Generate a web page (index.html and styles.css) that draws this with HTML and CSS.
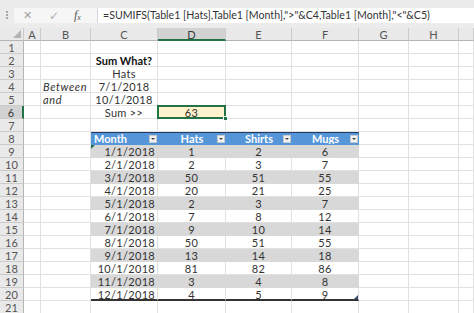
FILE: index.html
```html
<!DOCTYPE html>
<html>
<head>
<meta charset="utf-8">
<link rel="stylesheet" href="styles.css">
</head>
<body>
<div class="fbar">
  <div class="grip"><i></i><i></i><i></i></div>
  <div class="btns">
    <span class="x">✕</span>
    <span class="ok">✓</span>
    <span class="fx">f<sub>x</sub></span>
  </div>
  <div class="formula">=SUMIFS(Table1 [Hats],Table1 [Month],"&gt;"&amp;C4,Table1 [Month],"&lt;"&amp;C5)</div>
</div>
<div class="sheet">
  <div class="ch corner"><svg width="8" height="8" viewBox="0 0 8 8"><polygon points="8,0 8,8 0,8" fill="#b4b4b4"/></svg></div>
  <div class="ch">A</div><div class="ch">B</div><div class="ch">C</div><div class="ch sel">D</div><div class="ch">E</div><div class="ch">F</div><div class="ch">G</div><div class="ch">H</div><div class="ch"></div>

  <div class="rh">1</div><div class="c"></div><div class="c"></div><div class="c"></div><div class="c"></div><div class="c"></div><div class="c"></div><div class="c"></div><div class="c"></div><div class="c"></div>
  <div class="rh">2</div><div class="c"></div><div class="c"></div><div class="c mid b">Sum What?</div><div class="c"></div><div class="c"></div><div class="c"></div><div class="c"></div><div class="c"></div><div class="c"></div>
  <div class="rh">3</div><div class="c"></div><div class="c"></div><div class="c mid">Hats</div><div class="c"></div><div class="c"></div><div class="c"></div><div class="c"></div><div class="c"></div><div class="c"></div>
  <div class="rh">4</div><div class="c"></div><div class="c it">Between</div><div class="c mid">7/1/2018</div><div class="c"></div><div class="c"></div><div class="c"></div><div class="c"></div><div class="c"></div><div class="c"></div>
  <div class="rh">5</div><div class="c"></div><div class="c it">and</div><div class="c mid">10/1/2018</div><div class="c"></div><div class="c"></div><div class="c"></div><div class="c"></div><div class="c"></div><div class="c"></div>
  <div class="rh sel">6</div><div class="c"></div><div class="c"></div><div class="c mid">Sum &gt;&gt;</div><div class="c mid active">63<span class="handle"></span></div><div class="c"></div><div class="c"></div><div class="c"></div><div class="c"></div><div class="c"></div>
  <div class="rh">7</div><div class="c"></div><div class="c"></div><div class="c"></div><div class="c"></div><div class="c"></div><div class="c"></div><div class="c"></div><div class="c"></div><div class="c"></div>

  <div class="rh">8</div><div class="c"></div><div class="c"></div>
  <div class="th left"><span class="lbl">Month</span><span class="dd"></span></div>
  <div class="th"><span class="lbl">Hats</span><span class="dd"></span></div>
  <div class="th"><span class="lbl">Shirts</span><span class="dd"></span></div>
  <div class="th"><span class="lbl">Mugs</span><span class="dd"></span></div>
  <div class="c"></div><div class="c"></div><div class="c"></div>

  <div class="rh">9</div><div class="c"></div><div class="c"></div><div class="c r band"><span class="err"></span>1/1/2018</div><div class="c mid band">1</div><div class="c mid band">2</div><div class="c mid band">6</div><div class="c"></div><div class="c"></div><div class="c"></div>
  <div class="rh">10</div><div class="c"></div><div class="c"></div><div class="c r">2/1/2018</div><div class="c mid">2</div><div class="c mid">3</div><div class="c mid">7</div><div class="c"></div><div class="c"></div><div class="c"></div>
  <div class="rh">11</div><div class="c"></div><div class="c"></div><div class="c r band">3/1/2018</div><div class="c mid band">50</div><div class="c mid band">51</div><div class="c mid band">55</div><div class="c"></div><div class="c"></div><div class="c"></div>
  <div class="rh">12</div><div class="c"></div><div class="c"></div><div class="c r">4/1/2018</div><div class="c mid">20</div><div class="c mid">21</div><div class="c mid">25</div><div class="c"></div><div class="c"></div><div class="c"></div>
  <div class="rh">13</div><div class="c"></div><div class="c"></div><div class="c r band">5/1/2018</div><div class="c mid band">2</div><div class="c mid band">3</div><div class="c mid band">7</div><div class="c"></div><div class="c"></div><div class="c"></div>
  <div class="rh">14</div><div class="c"></div><div class="c"></div><div class="c r">6/1/2018</div><div class="c mid">7</div><div class="c mid">8</div><div class="c mid">12</div><div class="c"></div><div class="c"></div><div class="c"></div>
  <div class="rh">15</div><div class="c"></div><div class="c"></div><div class="c r band">7/1/2018</div><div class="c mid band">9</div><div class="c mid band">10</div><div class="c mid band">14</div><div class="c"></div><div class="c"></div><div class="c"></div>
  <div class="rh">16</div><div class="c"></div><div class="c"></div><div class="c r">8/1/2018</div><div class="c mid">50</div><div class="c mid">51</div><div class="c mid">55</div><div class="c"></div><div class="c"></div><div class="c"></div>
  <div class="rh">17</div><div class="c"></div><div class="c"></div><div class="c r band">9/1/2018</div><div class="c mid band">13</div><div class="c mid band">14</div><div class="c mid band">18</div><div class="c"></div><div class="c"></div><div class="c"></div>
  <div class="rh">18</div><div class="c"></div><div class="c"></div><div class="c r">10/1/2018</div><div class="c mid">81</div><div class="c mid">82</div><div class="c mid">86</div><div class="c"></div><div class="c"></div><div class="c"></div>
  <div class="rh">19</div><div class="c"></div><div class="c"></div><div class="c r band">11/1/2018</div><div class="c mid band">3</div><div class="c mid band">4</div><div class="c mid band">8</div><div class="c"></div><div class="c"></div><div class="c"></div>
  <div class="rh">20</div><div class="c"></div><div class="c"></div><div class="c r last">12/1/2018</div><div class="c mid last">4</div><div class="c mid last">5</div><div class="c mid last">9<span class="resize"></span></div><div class="c"></div><div class="c"></div><div class="c"></div>
  <div class="rh">21</div><div class="c"></div><div class="c"></div><div class="c"></div><div class="c"></div><div class="c"></div><div class="c"></div><div class="c"></div><div class="c"></div><div class="c"></div>
</div>
</body>
</html>
```
FILE: styles.css
```css
* { box-sizing: border-box; margin: 0; padding: 0; }
html, body { width: 474px; height: 313px; overflow: hidden; background: #fff; }
body { font-family: Lato, "DejaVu Sans", sans-serif; font-size: 11px; color: #333; }

.fbar { height: 28px; background: #ececec; display: flex; align-items: flex-start; padding-top: 8px; }
.grip { width: 14px; height: 14px; display: flex; flex-direction: column; align-items: center; justify-content: center; gap: 1px; }
.grip i { display: block; width: 2px; height: 2px; background: #a8a8a8; }
.btns { width: 84px; height: 15px; background: #f6f6f6; display: flex; align-items: center; border-right: 1px solid #d8d8d8; }
.btns .x { color: #a0a0a0; font-family: "DejaVu Sans", sans-serif; font-size: 11px; margin-left: 9px; width: 26px; }
.btns .ok { color: #b0b0b0; font-family: "DejaVu Sans", sans-serif; font-size: 12px; width: 25px; }
.btns .fx { color: #555; font-family: "Liberation Serif", serif; font-style: italic; font-size: 12px; }
.btns .fx sub { font-size: 8px; vertical-align: -1px; }
.formula { flex: 1; height: 15px; background: #fff; padding-left: 5px; line-height: 15px; white-space: nowrap; color: #333; font-size: 10.6px; }

.sheet { display: grid; grid-template-columns: 24px 17px 50px 67px 68px 66px 67px 50px 50px 15px; grid-auto-rows: 13px; }
.c, .ch, .rh, .th { white-space: nowrap; overflow: hidden; line-height: 14px; }
.c { border-right: 1px solid #e1e1e1; border-bottom: 1px solid #e1e1e1; position: relative; overflow: visible; letter-spacing: 0.3px; }
.ch { background: #e9e9e9; border-right: 1px solid #cbcbcb; border-bottom: 1px solid #b5b5b5; text-align: center; color: #555; line-height: 13px; }
.ch.sel { background: #d2d2d2; border-bottom: 2px solid #217346; color: #3a3a3a; }
.corner { display: flex; align-items: flex-end; justify-content: flex-end; padding: 0 2px 2px 0; }
.rh { background: #e9e9e9; border-right: 1px solid #b5b5b5; border-bottom: 1px solid #cbcbcb; text-align: center; color: #555; }
.rh.sel { background: #d2d2d2; border-right: 2px solid #217346; color: #3a3a3a; }

.mid { text-align: center; }
.r { text-align: right; padding-right: 2px; }
.b { font-weight: bold; color: #111; letter-spacing: 0; }
.it { font-style: italic; padding-left: 2px; letter-spacing: 0.6px; }

.active { background: #fff2cc; }
.active::after { content: ""; position: absolute; left: -1px; top: -1px; right: -1px; bottom: -1px; border: 2px solid #217346; }
.handle { position: absolute; right: -3px; bottom: -3px; width: 5px; height: 5px; background: #217346; border: 1px solid #fff; z-index: 2; }

.th { display: flex; align-items: center; background: #5596d8; color: #fff; font-weight: bold; box-shadow: inset 0 1px 0 #22385e; border-bottom: 1px solid #5596d8; padding-right: 1px; }
.th .lbl { flex: 1; text-align: center; padding-left: 9px; line-height: 14px; padding-top: 1px; }
.th.left .lbl { text-align: left; padding-left: 3px; }
.dd { width: 8px; height: 8px; background: #f1f1f1; border: 1px solid #c8c8c8; position: relative; margin-top: 1px; }
.dd::after { content: ""; position: absolute; left: 1px; top: 2px; border-left: 2px solid transparent; border-right: 2px solid transparent; border-top: 2px solid #444; }

.band { background: #d8d8d8; border-right-color: #d8d8d8; border-bottom-color: #d8d8d8; }
.last { border-bottom: 2px solid #333; line-height: 13px; }
.err { position: absolute; left: 0; top: 0; width: 0; height: 0; border-top: 4px solid #1e7145; border-right: 4px solid transparent; }
.resize { position: absolute; right: 0; bottom: 0; width: 0; height: 0; border-bottom: 4px solid #3d4a7a; border-left: 4px solid transparent; }
```
